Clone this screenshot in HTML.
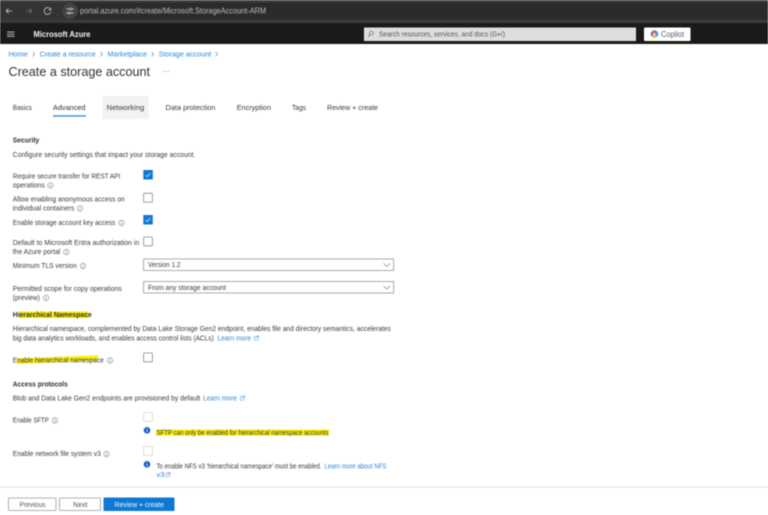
<!DOCTYPE html>
<html lang="en">
<head>
<meta charset="utf-8">
<title>Create a storage account</title>
<style>
html,body{margin:0;padding:0;background:#fff;width:768px;height:515px;overflow:hidden}
svg{display:block;filter:blur(.45px)}
text{font-family:"Liberation Sans",sans-serif;font-size:7.3px;fill:#3b3a39}
.l{fill:#2b88d8}
.b{font-weight:bold;fill:#323130}
.t{font-size:7.4px;fill:#555}
.i circle{fill:none;stroke:#777;stroke-width:.55}
.i path{stroke:#777;stroke-width:.7;fill:none}
.x path{stroke:#5a9bd8;stroke-width:.55;fill:none}
.hl{fill:#fbee10}
.cb{fill:#fff;stroke:#8a8886;stroke-width:.8}
.cbd{fill:#fff;stroke:#d6d4d2;stroke-width:.8}
.ck{fill:#0f78d4}
.ckm{stroke:#dbeafb;stroke-width:.8;fill:none}
.sel{fill:#fff;stroke:#8a8886;stroke-width:.7}
.chev{stroke:#777;stroke-width:.6;fill:none}
</style>
</head>
<body>
<svg width="768" height="515" viewBox="0 0 768 515" xmlns="http://www.w3.org/2000/svg">
<defs>
<g id="info" class="i"><circle cx="3" cy="3" r="2.7"/><path d="M3 2.6V4.6M3 1.4V2"/></g>
<g id="ext" class="x"><path d="M.5 1.2H3M.5 1.2V4.6H3.9V2.6M2.4.4H4.6V2.6M4.6.4L2.4 2.6"/></g>
<g id="blue"><circle cx="3.3" cy="3.3" r="3.3" fill="#0f5fc4"/><path d="M3.3 3V5.2M3.3 1.4V2.2" stroke="#fff" stroke-width=".9"/></g>
<g id="chk"><rect class="ck" width="9.5" height="9.5" rx=".6"/><path class="ckm" d="M2.4 5.2L4 6.6L7.2 3"/></g>
</defs>

<!-- browser chrome -->
<rect width="768" height="23" fill="#333"/>
<rect width="768" height="2.5" fill="#3d3d3d"/>
<rect x="61" y="2.5" width="720" height="17" rx="8.5" fill="#2b2b2b"/>
<rect y="19.5" width="768" height="4" fill="#3a3a3a"/>
<path d="M6 11H12M6 11L8.6 8.6M6 11L8.6 13.4" stroke="#b0b0b0" stroke-width="1" fill="none"/>
<path d="M26 11H32M32 11L29.4 8.6M32 11L29.4 13.4" stroke="#6a6a6a" stroke-width="1" fill="none"/>
<path d="M50.5 9.2A3.4 3.4 0 1 0 50.8 12M50.8 7.8V10H48.6" stroke="#b0b0b0" stroke-width="1" fill="none"/>
<circle cx="70" cy="11" r="8" fill="#444"/>
<path d="M66.5 9H70M72 9H73.5M66.5 13H68M70 13H73.5" stroke="#c8c8c8" stroke-width=".9" fill="none"/>
<circle cx="71" cy="9" r="1" fill="none" stroke="#c8c8c8" stroke-width=".7"/>
<circle cx="69" cy="13" r="1" fill="none" stroke="#c8c8c8" stroke-width=".7"/>
<text x="80" y="13.5" textLength="186" lengthAdjust="spacingAndGlyphs" style="fill:#bcbcbc;font-size:8px">portal.azure.com/#create/Microsoft.StorageAccount-ARM</text>

<!-- azure header -->
<rect y="23" width="768" height="21" fill="#1b1a19"/>
<path d="M7 32H14.5M7 34.2H14.5M7 36.4H14.5" stroke="#b8b8b8" stroke-width="1" fill="none"/>
<text x="33.5" y="37" textLength="57" lengthAdjust="spacingAndGlyphs" style="fill:#f4f4f4;font-size:8.4px;font-weight:bold">Microsoft Azure</text>
<rect x="364" y="27.5" width="272" height="13.5" fill="#dfdedc"/>
<circle cx="371.4" cy="33.2" r="1.9" fill="none" stroke="#666" stroke-width=".7"/>
<path d="M370 34.8L368 37" stroke="#666" stroke-width=".7"/>
<text x="379" y="36.7" textLength="126" lengthAdjust="spacingAndGlyphs" class="t">Search resources, services, and docs (G+/)</text>
<rect x="644" y="27.5" width="46.5" height="13.5" rx="1" fill="#fff"/>
<circle cx="654.4" cy="34" r="3.8" fill="#4a8fe0"/>
<path d="M651 33A3.6 3.6 0 0 1 656.6 31.2L654.4 34Z" fill="#e0527e"/>
<path d="M651.4 36A3.6 3.6 0 0 0 657 36.5L654.4 34Z" fill="#e9c13c"/>
<circle cx="654.4" cy="34" r="1" fill="#fff"/>
<text x="661" y="37" textLength="23" lengthAdjust="spacingAndGlyphs" style="fill:#5a5a78;font-size:7.8px">Copilot</text>

<!-- breadcrumb -->
<text class="l" x="8.5" y="56.5" textLength="19.5" lengthAdjust="spacingAndGlyphs">Home</text>
<path class="chev" d="M32.5 52L34.7 54.2L32.5 56.4"/>
<text class="l" x="39.7" y="56.5" textLength="56" lengthAdjust="spacingAndGlyphs">Create a resource</text>
<path class="chev" d="M100.5 52L102.7 54.2L100.5 56.4"/>
<text class="l" x="107.5" y="56.5" textLength="39.5" lengthAdjust="spacingAndGlyphs">Marketplace</text>
<path class="chev" d="M151.5 52L153.7 54.2L151.5 56.4"/>
<text class="l" x="158.7" y="56.5" textLength="52.5" lengthAdjust="spacingAndGlyphs">Storage account</text>
<path class="chev" d="M215.5 52L217.7 54.2L215.5 56.4"/>

<!-- title -->
<text x="8.5" y="76" textLength="141.5" lengthAdjust="spacingAndGlyphs" style="font-size:13px;fill:#323130">Create a storage account</text>
<circle cx="164" cy="71.5" r=".5" fill="#888"/><circle cx="166.2" cy="71.5" r=".5" fill="#888"/><circle cx="168.4" cy="71.5" r=".5" fill="#888"/>

<!-- tabs -->
<rect x="102.5" y="96" width="46" height="23" fill="#f3f2f1"/>
<text x="12.8" y="110" textLength="19" lengthAdjust="spacingAndGlyphs">Basics</text>
<text x="53" y="110" textLength="32.5" lengthAdjust="spacingAndGlyphs" style="fill:#323130">Advanced</text>
<rect x="53" y="115.3" width="33" height="1.3" fill="#2b88d8"/>
<text x="106.7" y="110" textLength="37.5" lengthAdjust="spacingAndGlyphs">Networking</text>
<text x="165.5" y="110" textLength="50" lengthAdjust="spacingAndGlyphs">Data protection</text>
<text x="236.7" y="110" textLength="34.3" lengthAdjust="spacingAndGlyphs">Encryption</text>
<text x="292" y="110" textLength="14" lengthAdjust="spacingAndGlyphs">Tags</text>
<text x="327" y="110" textLength="51" lengthAdjust="spacingAndGlyphs">Review + create</text>

<!-- security -->
<text class="b" x="12.8" y="142.3" textLength="26.5" lengthAdjust="spacingAndGlyphs">Security</text>
<text x="12.8" y="157" textLength="182.5" lengthAdjust="spacingAndGlyphs">Configure security settings that impact your storage account.</text>

<text x="12.8" y="178.5" textLength="107.5" lengthAdjust="spacingAndGlyphs">Require secure transfer for REST API</text>
<text x="12.8" y="187.5" textLength="32" lengthAdjust="spacingAndGlyphs">operations</text>
<use href="#info" x="47.5" y="182.3"/>
<use href="#chk" x="143.3" y="170"/>

<text x="12.8" y="201.5" textLength="112" lengthAdjust="spacingAndGlyphs">Allow enabling anonymous access on</text>
<text x="12.8" y="210.5" textLength="61.5" lengthAdjust="spacingAndGlyphs">individual containers</text>
<use href="#info" x="77" y="205.5"/>
<rect class="cb" x="143.6" y="193.3" width="8.8" height="8.8" rx=".6"/>

<text x="12.8" y="225" textLength="102.5" lengthAdjust="spacingAndGlyphs">Enable storage account key access</text>
<use href="#info" x="118.5" y="220"/>
<use href="#chk" x="143.3" y="215"/>

<text x="12.8" y="245" textLength="126.5" lengthAdjust="spacingAndGlyphs">Default to Microsoft Entra authorization in</text>
<text x="12.8" y="254" textLength="47.5" lengthAdjust="spacingAndGlyphs">the Azure portal</text>
<use href="#info" x="63.3" y="249"/>
<rect class="cb" x="143.6" y="237" width="8.8" height="8.8" rx=".6"/>

<text x="12.8" y="268" textLength="64" lengthAdjust="spacingAndGlyphs">Minimum TLS version</text>
<use href="#info" x="80" y="263"/>
<rect class="sel" x="143.6" y="259" width="250" height="11.5"/>
<text x="148" y="267" textLength="32.5" lengthAdjust="spacingAndGlyphs">Version 1.2</text>
<path class="chev" d="M383.5 263.5L386.7 266.5L390 263.5"/>

<text x="12.8" y="291" textLength="109" lengthAdjust="spacingAndGlyphs">Permitted scope for copy operations</text>
<text x="12.8" y="300" textLength="27" lengthAdjust="spacingAndGlyphs">(preview)</text>
<use href="#info" x="43" y="295"/>
<rect class="sel" x="143.6" y="281.5" width="250" height="11.5"/>
<text x="148" y="290" textLength="78" lengthAdjust="spacingAndGlyphs">From any storage account</text>
<path class="chev" d="M383.5 286L386.7 289L390 286"/>

<!-- hierarchical -->
<rect class="hl" x="19" y="311.5" width="69.5" height="6.5"/>
<text class="b" x="12.8" y="317" textLength="79" lengthAdjust="spacingAndGlyphs">Hierarchical Namespace</text>
<text x="12.8" y="331" textLength="378" lengthAdjust="spacingAndGlyphs">Hierarchical namespace, complemented by Data Lake Storage Gen2 endpoint, enables file and directory semantics, accelerates</text>
<text x="12.8" y="340.5" textLength="201" lengthAdjust="spacingAndGlyphs">big data analytics workloads, and enables access control lists (ACLs)</text>
<text class="l" x="217.5" y="340.5" textLength="33.5" lengthAdjust="spacingAndGlyphs">Learn more</text>
<use href="#ext" x="254" y="335.5"/>

<path d="M17 358.5L98 355.2V360.8L17 364Z" class="hl"/>
<text x="12.8" y="362.5" textLength="91" lengthAdjust="spacingAndGlyphs">Enable hierarchical namespace</text>
<use href="#info" x="107" y="357.5"/>
<rect class="cb" x="143.6" y="353" width="8.8" height="8.8" rx=".6"/>

<!-- access protocols -->
<text class="b" x="12.8" y="386.5" textLength="55" lengthAdjust="spacingAndGlyphs">Access protocols</text>
<text x="12.8" y="400.5" textLength="187.5" lengthAdjust="spacingAndGlyphs">Blob and Data Lake Gen2 endpoints are provisioned by default</text>
<text class="l" x="203" y="400.5" textLength="34" lengthAdjust="spacingAndGlyphs">Learn more</text>
<use href="#ext" x="240" y="395.5"/>

<text x="12.8" y="422.5" textLength="36" lengthAdjust="spacingAndGlyphs">Enable SFTP</text>
<use href="#info" x="52" y="417.5"/>
<rect class="cbd" x="143.6" y="412.5" width="8.8" height="8.8" rx=".6"/>
<use href="#blue" x="143.7" y="427"/>
<rect class="hl" x="156" y="429.5" width="173" height="6"/>
<text x="156.5" y="435" textLength="172" lengthAdjust="spacingAndGlyphs">SFTP can only be enabled for hierarchical namespace accounts</text>

<text x="12.8" y="456" textLength="88" lengthAdjust="spacingAndGlyphs">Enable network file system v3</text>
<use href="#info" x="103.5" y="451"/>
<rect class="cbd" x="143.6" y="446.5" width="8.8" height="8.8" rx=".6"/>
<use href="#blue" x="143.7" y="461"/>
<text x="156.5" y="468.5" textLength="165" lengthAdjust="spacingAndGlyphs">To enable NFS v3 'hierarchical namespace' must be enabled.</text>
<text class="l" x="324.5" y="468.5" textLength="62" lengthAdjust="spacingAndGlyphs">Learn more about NFS</text>
<text class="l" x="156.5" y="477" textLength="8" lengthAdjust="spacingAndGlyphs">v3</text>
<use href="#ext" x="165.5" y="472"/>

<!-- footer -->
<rect y="486.5" width="768" height="1.2" fill="#e8e8e8"/>
<rect x="8.5" y="498" width="47.5" height="12.5" rx=".8" fill="#fff" stroke="#9a9896" stroke-width=".8"/>
<text x="19.5" y="507" textLength="26" lengthAdjust="spacingAndGlyphs" style="fill:#555">Previous</text>
<rect x="59.5" y="498" width="41" height="12.5" rx=".8" fill="#fff" stroke="#9a9896" stroke-width=".8"/>
<text x="73" y="507" textLength="14.5" lengthAdjust="spacingAndGlyphs" style="fill:#555">Next</text>
<rect x="103.5" y="497.5" width="71" height="13.5" rx=".8" fill="#0f78d4"/>
<text x="114.5" y="507" textLength="49.5" lengthAdjust="spacingAndGlyphs" style="fill:#f2f8fd">Review + create</text>
</svg>
</body>
</html>
